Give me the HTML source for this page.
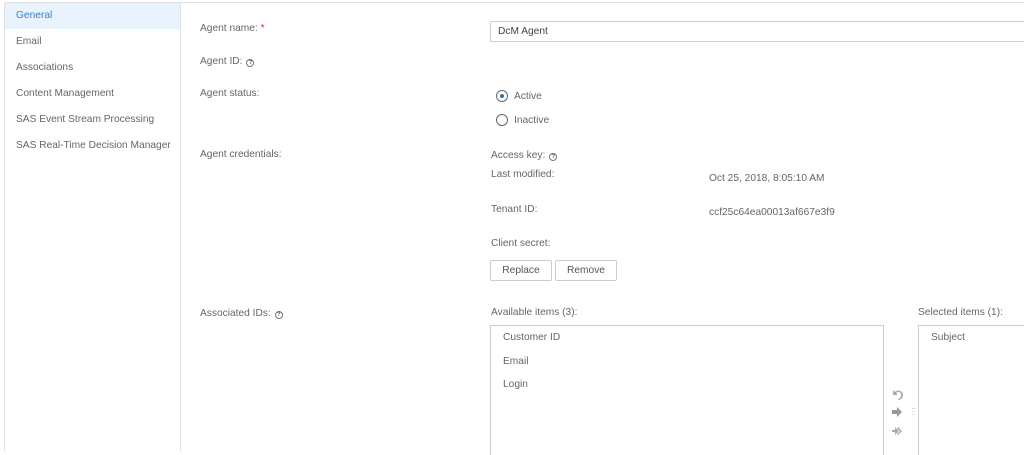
<!DOCTYPE html>
<html><head><meta charset="utf-8"><style>
*{box-sizing:border-box;margin:0;padding:0}
body{width:1024px;height:451px;overflow:hidden;background:#fff;font-family:"Liberation Sans",Arial,sans-serif;font-size:10.2px;color:#666;position:relative}
.a{position:absolute;white-space:nowrap}
.side{position:absolute;left:4px;top:2px;width:177px;height:449px;border-left:1px solid #e2e2e2;border-right:1px solid #e2e2e2;border-top:1px solid #e2e2e2;background:#fff}
.topb{position:absolute;left:180px;top:2px;right:0;border-top:1px solid #e2e2e2}
.sel{position:absolute;left:5px;top:3px;width:175px;height:26px;background:#e8f3fd}
.q{display:inline-block;width:8px;height:8px;border:1px solid #777;border-radius:50%;font-size:6px;line-height:6px;text-align:center;vertical-align:0;margin-left:4px;color:#555;font-weight:bold}
.btn{position:absolute;height:21px;border:1px solid #ccc;border-radius:2px;text-align:center;line-height:19px;color:#555;background:#fff}
.box{position:absolute;border:1px solid #ccc;border-bottom:none}
.rad{position:absolute;width:12px;height:12px;border:1px solid #666;border-radius:50%}
</style></head><body>
<div class="side"></div><div class="topb"></div>
<div class="sel"></div>
<div class="a" style="left:16px;top:10px;color:#3a7fc1">General</div>
<div class="a" style="left:16px;top:36px">Email</div>
<div class="a" style="left:16px;top:62px">Associations</div>
<div class="a" style="left:16px;top:88px">Content Management</div>
<div class="a" style="left:16px;top:114px">SAS Event Stream Processing</div>
<div class="a" style="left:16px;top:140px">SAS Real-Time Decision Manager</div>

<div class="a" style="left:200px;top:23px">Agent name: <span style="color:#d22">*</span></div>
<div class="a" style="left:200px;top:56px">Agent ID:<span class="q">?</span></div>
<div class="a" style="left:200px;top:88px">Agent status:</div>
<div class="a" style="left:200px;top:149px">Agent credentials:</div>
<div class="a" style="left:200px;top:308px">Associated IDs:<span class="q">?</span></div>

<div style="position:absolute;left:490px;top:21px;width:540px;height:21px;border:1px solid #ccc;border-radius:2px"></div>
<div class="a" style="left:498px;top:26px;color:#444">DcM Agent</div>

<div class="rad" style="left:496px;top:90px"><div style="position:absolute;left:3px;top:3px;width:4px;height:4px;border-radius:50%;background:#2a6fb8"></div></div>
<div class="a" style="left:514px;top:91px">Active</div>
<div class="rad" style="left:496px;top:114px"></div>
<div class="a" style="left:514px;top:115px">Inactive</div>

<div class="a" style="left:491px;top:150px">Access key:<span class="q">?</span></div>
<div class="a" style="left:491px;top:169px">Last modified:</div>
<div class="a" style="left:709px;top:173px">Oct 25, 2018, 8:05:10 AM</div>
<div class="a" style="left:491px;top:204px">Tenant ID:</div>
<div class="a" style="left:709px;top:207px">ccf25c64ea00013af667e3f9</div>
<div class="a" style="left:491px;top:238px">Client secret:</div>
<div class="btn" style="left:490px;top:260px;width:62px">Replace</div>
<div class="btn" style="left:555px;top:260px;width:62px">Remove</div>

<div class="a" style="left:491px;top:307px">Available items (3):</div>
<div class="box" style="left:490px;top:325px;width:394px;height:130px"></div>
<div class="a" style="left:503px;top:332px">Customer ID</div>
<div class="a" style="left:503px;top:356px">Email</div>
<div class="a" style="left:503px;top:379px">Login</div>

<div class="a" style="left:918px;top:307px">Selected items (1):</div>
<div class="box" style="left:918px;top:325px;width:110px;height:130px"></div>
<div class="a" style="left:931px;top:332px">Subject</div>

<svg class="a" style="left:890px;top:386px" width="30" height="56" viewBox="0 0 30 56">
<path d="M3 4 L3 9 L8 9 L6 7 C8 5 11 6 11 9 C11 11 10 12 8 13 L9 14 C12 13 13 11 13 9 C13 5 8 3 5 6 Z" fill="#aaa"/>
<path d="M2 24 H7 V21 L12 26 L7 31 V28 H2 Z" fill="#999"/>
<path d="M2 44 H5 V41 L9 45 L5 49 V46 H2 Z M8 41 L12 45 L8 49 L7 48 L10 45 L7 42 Z" fill="#aaa"/>
<g fill="#ccc"><rect x="22" y="22" width="1" height="1"/><rect x="24" y="22" width="1" height="1"/><rect x="22" y="25" width="1" height="1"/><rect x="24" y="25" width="1" height="1"/><rect x="22" y="28" width="1" height="1"/><rect x="24" y="28" width="1" height="1"/></g>
</svg>
</body></html>
